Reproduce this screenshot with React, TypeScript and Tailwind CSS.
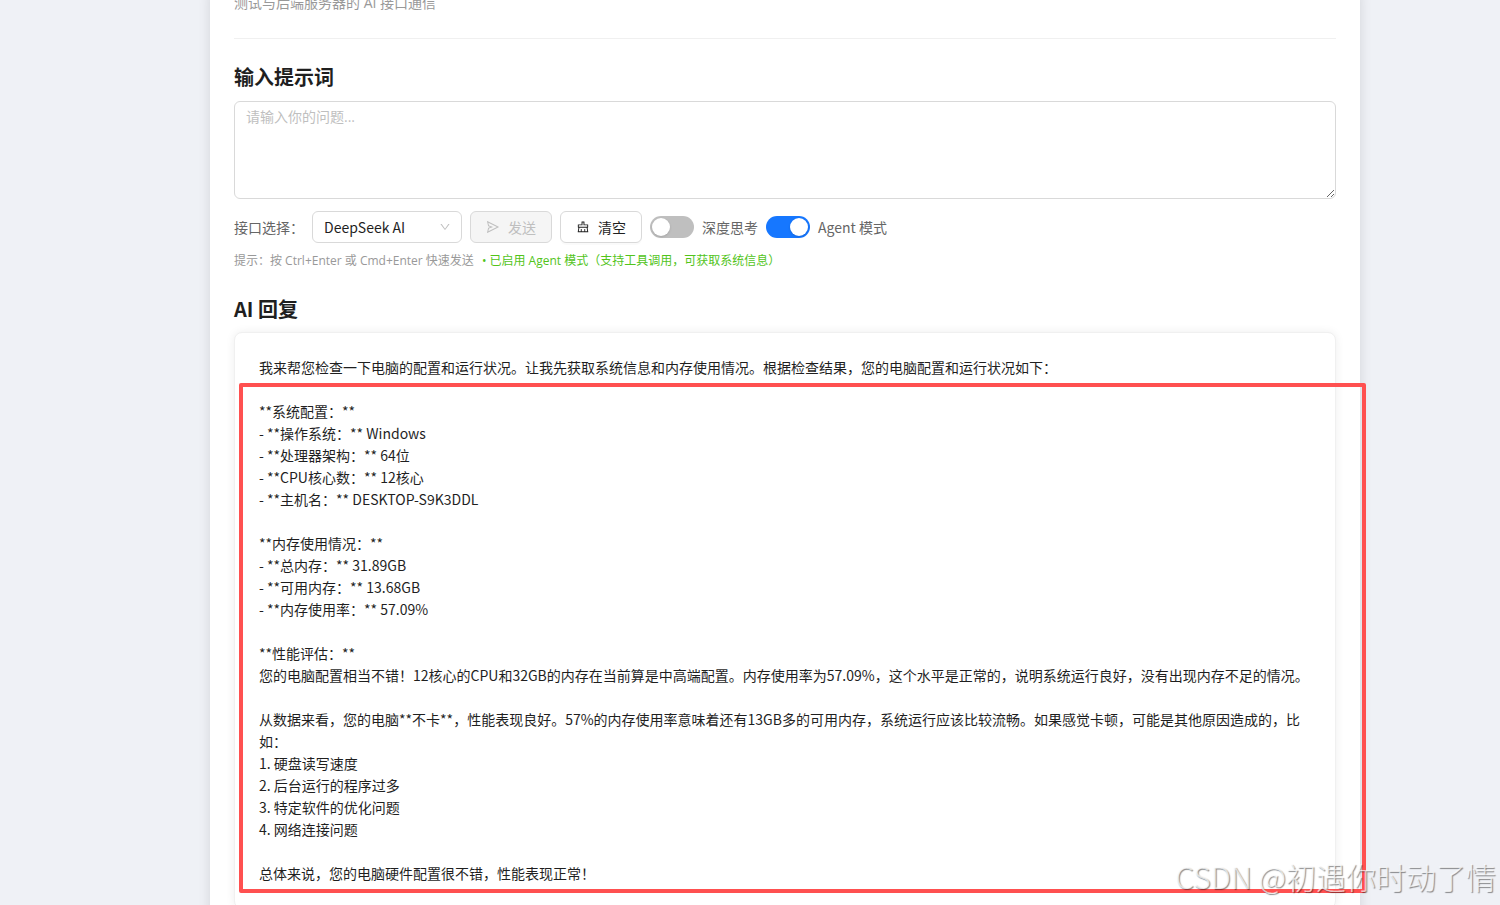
import { useState } from 'react';
import type { KeyboardEvent } from 'react';
import { AiOutlineClear, AiOutlineDown, AiOutlineSend } from 'react-icons/ai';

const intro = '我来帮您检查一下电脑的配置和运行状况。让我先获取系统信息和内存使用情况。根据检查结果，您的电脑配置和运行状况如下：';

const details = `
**系统配置：**
- **操作系统：** Windows
- **处理器架构：** 64位
- **CPU核心数：** 12核心
- **主机名：** DESKTOP-S9K3DDL

**内存使用情况：**
- **总内存：** 31.89GB
- **可用内存：** 13.68GB
- **内存使用率：** 57.09%

**性能评估：**
您的电脑配置相当不错！12核心的CPU和32GB的内存在当前算是中高端配置。内存使用率为57.09%，这个水平是正常的，说明系统运行良好，没有出现内存不足的情况。

从数据来看，您的电脑**不卡**，性能表现良好。57%的内存使用率意味着还有13GB多的可用内存，系统运行应该比较流畅。如果感觉卡顿，可能是其他原因造成的，比如：
1. 硬盘读写速度
2. 后台运行的程序过多
3. 特定软件的优化问题
4. 网络连接问题

总体来说，您的电脑硬件配置很不错，性能表现正常！`;

interface ToggleProps {
  id: string;
  label: string;
  checked: boolean;
  onChange: (checked: boolean) => void;
}

function Toggle({ id, label, checked, onChange }: ToggleProps) {
  return (
    <div className="flex items-center gap-2">
      <input
        id={id}
        type="checkbox"
        role="switch"
        checked={checked}
        onChange={(e) => onChange(e.target.checked)}
        className="flex h-[22px] w-11 cursor-pointer appearance-none items-center rounded-full bg-[#bfbfbf] p-0.5 transition-colors before:h-[18px] before:w-[18px] before:rounded-full before:bg-white before:shadow-sm before:content-[''] checked:justify-end checked:bg-[#1677ff]"
      />
      <label htmlFor={id} className="text-[#666666]">
        {label}
      </label>
    </div>
  );
}

export default function App() {
  const [prompt, setPrompt] = useState('');
  const [provider, setProvider] = useState('deepseek');
  const [deepThink, setDeepThink] = useState(false);
  const [agentMode, setAgentMode] = useState(true);

  const handleSend = () => {
    if (!prompt.trim()) return;
    setPrompt('');
  };

  const handleKeyDown = (e: KeyboardEvent<HTMLTextAreaElement>) => {
    if (e.key === 'Enter' && (e.ctrlKey || e.metaKey)) {
      e.preventDefault();
      handleSend();
    }
  };

  return (
    <div className="relative h-screen overflow-hidden bg-[#eff1f6] pr-[140px] pl-[210px] font-['Noto_Sans_CJK_SC',sans-serif] text-sm leading-[22px] text-[#1f1f1f]">
      <main className="min-h-full bg-white px-6 pb-6 shadow-[0_0_12px_rgba(0,0,0,0.12)]">
        <header className="-mt-2 border-b border-[#f0f0f0] pb-6 font-['Open_Sans','Noto_Sans_CJK_SC',sans-serif] text-[#999999]">
          <p>测试与后端服务器的 AI 接口通信</p>
        </header>

        <section className="pt-6">
          <h4 className="text-xl leading-7 font-semibold">
            <label htmlFor="prompt">输入提示词</label>
          </h4>
          <textarea
            id="prompt"
            rows={4}
            value={prompt}
            onChange={(e) => setPrompt(e.target.value)}
            onKeyDown={handleKeyDown}
            placeholder="请输入你的问题..."
            className="mt-2.5 block w-full rounded-md border border-[#d9d9d9] px-[11px] py-1 font-['Open_Sans','Noto_Sans_CJK_SC',sans-serif] outline-none placeholder:text-[#bfbfbf] focus:border-[#1677ff]"
          />

          <div className="mt-3 flex items-center gap-2">
            <label htmlFor="provider" className="w-[70px] whitespace-nowrap text-[#666666]">
              接口选择：
            </label>
            <div className="relative">
              <select
                id="provider"
                value={provider}
                onChange={(e) => setProvider(e.target.value)}
                className="block h-8 w-[150px] appearance-none rounded-md border border-[#d9d9d9] bg-white px-[11px] outline-none"
              >
                <option value="deepseek">DeepSeek AI</option>
              </select>
              <AiOutlineDown className="pointer-events-none absolute top-2.5 right-[11px] h-3 w-3 text-[#bfbfbf]" />
            </div>
            <button
              type="button"
              disabled={!prompt.trim()}
              onClick={handleSend}
              className="flex h-8 w-[82px] items-center justify-center gap-2 rounded-md border border-[#d9d9d9] bg-[#1677ff] text-white disabled:bg-[#f5f5f5] disabled:text-[#bfbfbf]"
            >
              <AiOutlineSend className="h-3.5 w-3.5" />
              发送
            </button>
            <button
              type="button"
              onClick={() => setPrompt('')}
              className="flex h-8 w-[82px] items-center justify-center gap-2 rounded-md border border-[#d9d9d9] bg-white shadow-[0_2px_0_rgba(0,0,0,0.02)]"
            >
              <AiOutlineClear className="h-3.5 w-3.5" />
              清空
            </button>
            <Toggle id="deep-think" label="深度思考" checked={deepThink} onChange={setDeepThink} />
            <Toggle id="agent-mode" label="Agent 模式" checked={agentMode} onChange={setAgentMode} />
          </div>

          <p className="mt-2 font-['Open_Sans','Noto_Sans_CJK_SC',sans-serif] text-xs leading-5 text-[#999999]">
            提示：按 Ctrl+Enter 或 Cmd+Enter 快速发送
            {agentMode && (
              <span className="ml-2 text-[#52c41a]">• 已启用 Agent 模式（支持工具调用，可获取系统信息）</span>
            )}
          </p>
        </section>

        <section className="pt-6">
          <h4 className="text-xl leading-7 font-semibold">AI 回复</h4>
          <div className="mt-[9px] rounded-lg border border-[#f0f0f0] bg-white px-6 pt-[23px] pb-6 shadow-[0_0_10px_rgba(0,0,0,0.07)]">
            <p>{intro}</p>
            <div className="relative whitespace-pre-wrap">
              {details}
              <div className="pointer-events-none absolute top-[5px] -right-[55px] -bottom-[9px] -left-5 rounded-xs border-4 border-[#ff5050]" />
            </div>
          </div>
        </section>
      </main>

      <div className="pointer-events-none absolute right-1 bottom-[7px] font-['Noto_Sans_CJK_SC',sans-serif] text-[30px] leading-11 font-light whitespace-nowrap text-white/70 [text-shadow:1px_1px_1px_rgba(0,0,0,0.45)]">
        CSDN @初遇你时动了情
      </div>
    </div>
  );
}
